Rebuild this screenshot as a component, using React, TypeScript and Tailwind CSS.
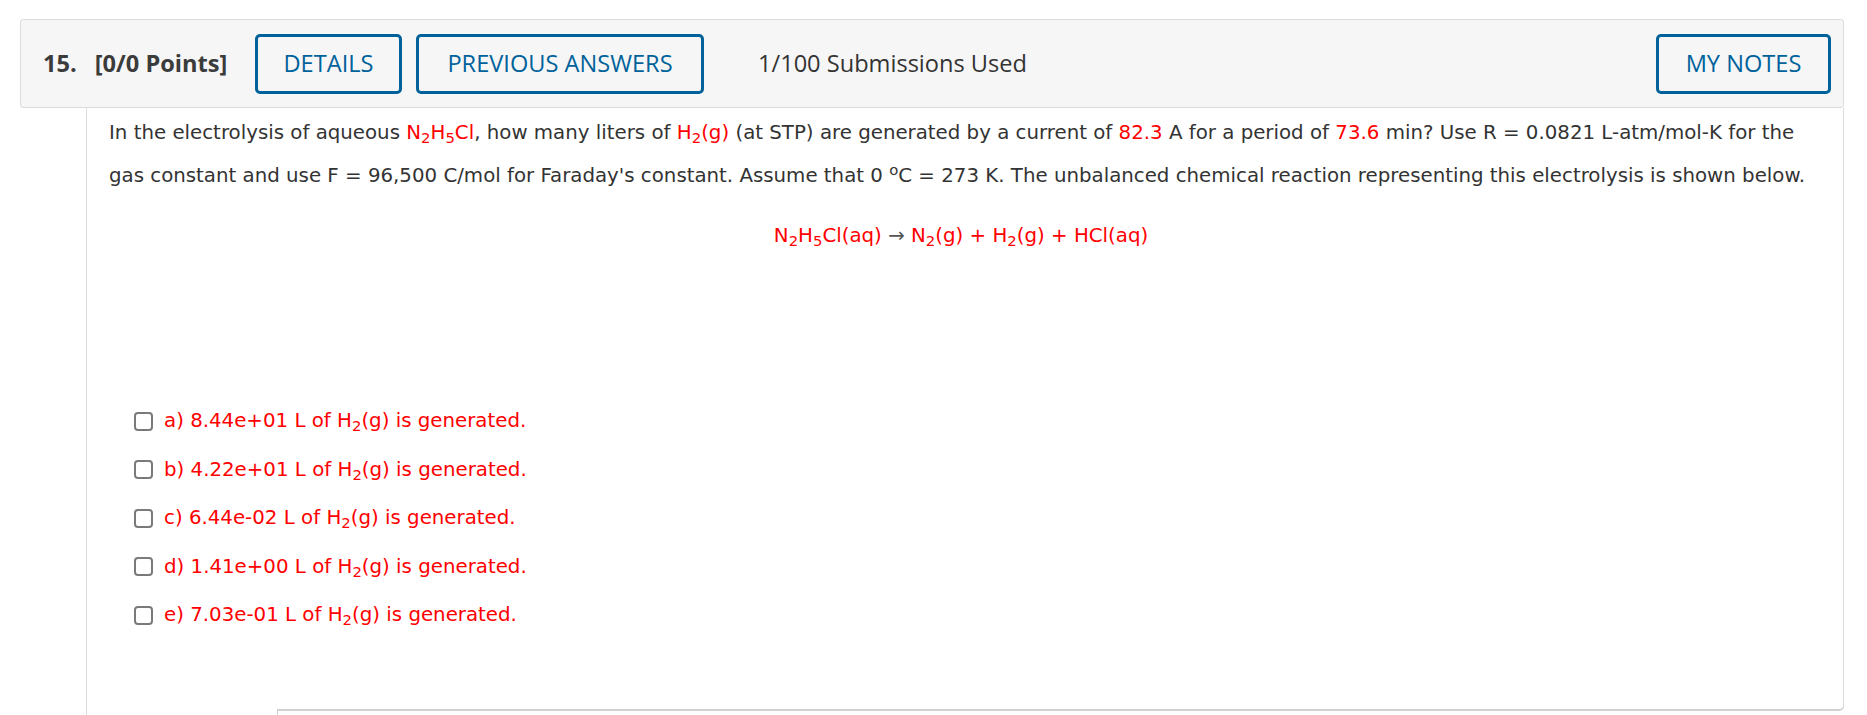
import React from 'react';

const blue = 'border-[#00629b] text-[#00629b]';

function H2() {
  return (
    <>
      H<sub>2</sub>(g)
    </>
  );
}

const choices = [
  { key: 'a', value: '8.44e+01' },
  { key: 'b', value: '4.22e+01' },
  { key: 'c', value: '6.44e-02' },
  { key: 'd', value: '1.41e+00' },
  { key: 'e', value: '7.03e-01' },
];

function HeaderButton({ label, width }: { label: string; width: string }) {
  return (
    <button
      type="button"
      className={`h-[60px] ${width} border-[3px] ${blue} rounded-[5px] text-[23.6px] font-medium font-['Open_Sans',sans-serif] flex items-center justify-center`}
    >
      {label}
    </button>
  );
}

export default function App() {
  return (
    <div className="w-full h-[715px] overflow-hidden bg-white pt-[19px] pl-[20px] pr-[23px]">
      {/* question header */}
      <div className="h-[89px] bg-[#f6f6f6] border border-[#dcdcdc] rounded-[3px] flex items-center pl-[22px] pr-[12px] font-['Open_Sans',sans-serif]">
        <div className="w-[212px] shrink-0 flex items-center text-[23.6px] font-bold text-[#3b3b3b]">
          <span>15.</span>
          <span className="ml-[18px]">[0/0 Points]</span>
        </div>
        <div className="flex gap-[14px]">
          <HeaderButton label="DETAILS" width="w-[147px]" />
          <HeaderButton label="PREVIOUS ANSWERS" width="w-[288px]" />
        </div>
        <span className="ml-[54px] text-[23.6px] text-[#333]">1/100 Submissions Used</span>
        <div className="ml-auto">
          <HeaderButton label="MY NOTES" width="w-[175px]" />
        </div>
      </div>

      {/* question body */}
      <div className="ml-[66px] border-l border-[#dcdcdc] font-['DejaVu_Sans',Verdana,sans-serif] text-[#333]">
        <div className="h-[598px] border-r border-[#dcdcdc] pl-[22px] pr-[30px] pt-[3px]">
          <p className="text-[19.8px] leading-[43px]">
            In the electrolysis of aqueous{' '}
            <span className="text-[#ff0000]">
              N<sub>2</sub>H<sub>5</sub>Cl
            </span>
            , how many liters of{' '}
            <span className="text-[#ff0000]">
              <H2 />
            </span>{' '}
            (at STP) are generated by a current of <span className="text-[#ff0000]">82.3</span> A for a period
            of <span className="text-[#ff0000]">73.6</span> min? Use R = 0.0821 L-atm/mol-K for the gas constant and
            use F = 96,500 C/mol for Faraday's constant. Assume that 0 <sup>o</sup>C = 273 K. The unbalanced chemical
            reaction representing this electrolysis is shown below.
          </p>
          <p className="text-[19.8px] leading-[43px] text-center mt-[17px] text-[#ff0000]">
            N<sub>2</sub>H<sub>5</sub>Cl(aq) <span className="text-[#555]">→</span> N<sub>2</sub>(g) + H<sub>2</sub>(g)
            + HCl(aq)
          </p>

          <ul className="mt-[140px] pl-[25px] flex flex-col">
            {choices.map((c) => (
              <li key={c.key} className="h-[48.5px] flex items-center gap-[11px]">
                <span className="w-[19px] h-[19px] border-2 border-[#7a7a7a] rounded-[4px] bg-white shrink-0" />
                <span className="text-[19.8px] text-[#ff0000] whitespace-nowrap">
                  {c.key}) {c.value} L of <H2 /> is generated.
                </span>
              </li>
            ))}
          </ul>
        </div>
        <div className="ml-[190px] h-[5px] border-r border-b-2 border-[#d0d0d0] rounded-br-[5px]" />
        <div className="ml-[190px] h-[20px] border-l border-[#d0d0d0]" />
      </div>
    </div>
  );
}
